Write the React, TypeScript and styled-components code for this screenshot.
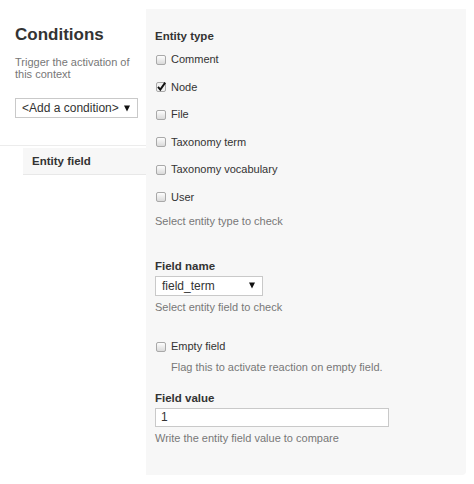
import React from 'react';
import styled, { createGlobalStyle } from 'styled-components';

const GlobalStyle = createGlobalStyle`
  html, body {
    margin: 0;
    padding: 0;
    background: #fff;
  }
  body {
    font-family: 'Liberation Sans', Arial, sans-serif;
    color: #333;
  }
`;

const Page = styled.div`
  display: flex;
  align-items: flex-start;
  padding-top: 9px;
`;

const Sidebar = styled.div`
  width: 146px;
  flex-shrink: 0;
`;

const SideHead = styled.div`
  padding: 0 8px 0 15px;
`;

const Title = styled.h2`
  margin: 16px 0 0;
  font-size: 17px;
  line-height: 20px;
  font-weight: bold;
  color: #333;
`;

const SideText = styled.p`
  margin: 11px 0 0;
  font-size: 11px;
  line-height: 12px;
  color: #777;
`;

const Select = styled.div<{ $width: number; $mt: number }>`
  box-sizing: border-box;
  width: ${(p) => p.$width}px;
  height: 20px;
  margin-top: ${(p) => p.$mt}px;
  padding: 0 7px 0 6px;
  display: flex;
  align-items: center;
  justify-content: space-between;
  border: 1px solid #c9c9c9;
  background: #fff;
  font-size: 12px;
  color: #333;
`;

const Arrow = () => (
  <svg width="6" height="7" viewBox="0 0 6 7">
    <path d="M0 0.5 H6 L3 6.5 Z" fill="#111" />
  </svg>
);

const Tabs = styled.div`
  margin-top: 27px;
  border-top: 1px solid #ececec;
  padding-top: 2px;
`;

const Tab = styled.div`
  margin-left: 23px;
  height: 26px;
  padding-left: 9px;
  display: flex;
  align-items: center;
  background: #f7f7f7;
  border-bottom: 1px solid #e8e8e8;
  font-size: 11.5px;
  font-weight: bold;
  color: #333;
`;

const Panel = styled.div`
  box-sizing: border-box;
  width: 320px;
  height: 466px;
  padding: 20px 9px 0;
  background: #f7f7f7;
  border-bottom-right-radius: 4px;
`;

const FieldLabel = styled.div<{ $mt?: number }>`
  margin-top: ${(p) => p.$mt ?? 0}px;
  font-size: 11.5px;
  line-height: 14px;
  font-weight: bold;
  color: #333;
`;

const OptionList = styled.div`
  margin-top: 9px;
  display: flex;
  flex-direction: column;
  gap: 13.5px;
`;

const Option = styled.label<{ $mt?: number }>`
  display: flex;
  align-items: center;
  height: 14px;
  margin-top: ${(p) => p.$mt ?? 0}px;
  font-size: 11px;
  color: #333;
`;

const Box = styled.span<{ $checked?: boolean }>`
  box-sizing: border-box;
  width: 10px;
  height: 10px;
  margin: 1px 5px 0 1px;
  position: relative;
  border: 1px solid #a9a9a9;
  border-radius: 2px;
  background: ${(p) =>
    p.$checked ? '#f2f2f2' : 'linear-gradient(#fdfdfd, #dadada)'};
  flex-shrink: 0;
`;

const Tick = styled.svg`
  position: absolute;
  left: -1px;
  top: -2px;
`;

const Help = styled.div<{ $mt: number; $indent?: number }>`
  margin-top: ${(p) => p.$mt}px;
  padding-left: ${(p) => p.$indent ?? 0}px;
  font-size: 11px;
  line-height: 14px;
  color: #777;
`;

const TextInput = styled.div`
  box-sizing: border-box;
  width: 234px;
  height: 19px;
  margin-top: 2.5px;
  padding-left: 5px;
  display: flex;
  align-items: center;
  border: 1px solid #c9c9c9;
  background: #fff;
  font-size: 12px;
  color: #333;
`;

const Checkbox = ({ label, checked, mt }: { label: string; checked?: boolean; mt?: number }) => (
  <Option $mt={mt}>
    <Box $checked={checked}>
      {checked && (
        <Tick width="11" height="11" viewBox="0 0 11 11">
          <path d="M2 5.8 L4.3 8.6 L9.2 1.6" fill="none" stroke="#111" strokeWidth="1.9" />
        </Tick>
      )}
    </Box>
    {label}
  </Option>
);

const entityTypes = [
  { label: 'Comment' },
  { label: 'Node', checked: true },
  { label: 'File' },
  { label: 'Taxonomy term' },
  { label: 'Taxonomy vocabulary' },
  { label: 'User' },
];

export default function App() {
  return (
    <>
      <GlobalStyle />
      <Page>
        <Sidebar>
          <SideHead>
            <Title>Conditions</Title>
            <SideText>Trigger the activation of this context</SideText>
            <Select $width={123} $mt={18}>
              &lt;Add a condition&gt;
              <Arrow />
            </Select>
          </SideHead>
          <Tabs>
            <Tab>Entity field</Tab>
          </Tabs>
        </Sidebar>
        <Panel>
          <FieldLabel>Entity type</FieldLabel>
          <OptionList>
            {entityTypes.map((t) => (
              <Checkbox key={t.label} label={t.label} checked={t.checked} />
            ))}
          </OptionList>
          <Help $mt={10.7}>Select entity type to check</Help>

          <FieldLabel $mt={31.3}>Field name</FieldLabel>
          <Select $width={108} $mt={2.5}>
            field_term
            <Arrow />
          </Select>
          <Help $mt={4.2}>Select entity field to check</Help>

          <Checkbox label="Empty field" mt={25} />
          <Help $mt={6.5} $indent={16}>Flag this to activate reaction on empty field.</Help>

          <FieldLabel $mt={17.8}>Field value</FieldLabel>
          <TextInput>1</TextInput>
          <Help $mt={4.2}>Write the entity field value to compare</Help>
        </Panel>
      </Page>
    </>
  );
}
